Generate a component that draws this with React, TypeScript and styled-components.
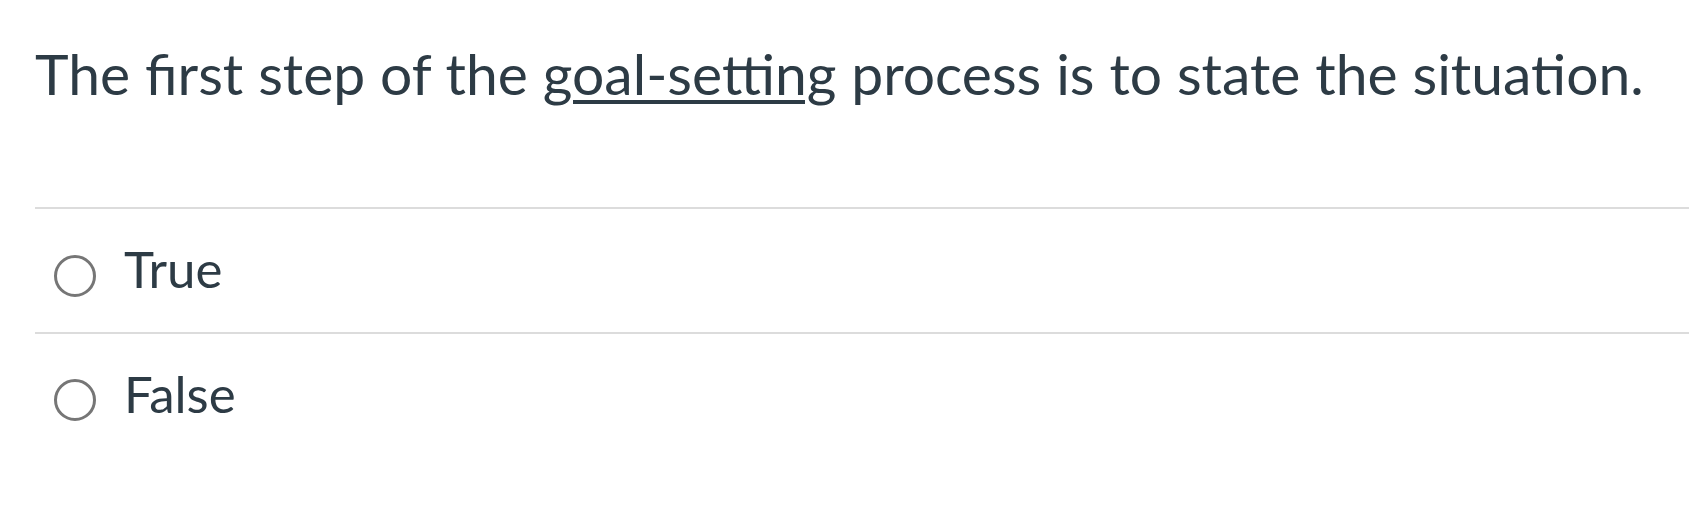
import React from "react";
import styled, { createGlobalStyle } from "styled-components";

const GlobalStyle = createGlobalStyle`
  html, body {
    margin: 0;
    padding: 0;
    background: #ffffff;
  }
  body {
    font-family: Lato, "Noto Sans", sans-serif;
    color: #2d3b45;
  }
`;

const Question = styled.div`
  padding: 0 15px 0 35px;
`;

const QuestionText = styled.p`
  margin: 0;
  padding-top: 39px;
  padding-bottom: 100px;
  font-size: 57px;
  line-height: 1.2;
  word-spacing: 0.3px;
  font-weight: 400;
`;

const Term = styled.span`
  text-decoration: underline;
  text-decoration-thickness: 3.5px;
  text-underline-offset: 5px;
`;

const Answers = styled.div`
  display: flex;
  flex-direction: column;
`;

const AnswerRow = styled.label`
  display: flex;
  align-items: flex-start;
  border-top: 2px solid #dcdcdc;
  padding: 28px 0 32px 19px;
  min-height: 62px;
`;

const Radio = styled.span`
  flex: none;
  width: 42px;
  height: 42px;
  margin-top: 17.5px;
  box-sizing: border-box;
  border: 3px solid #767676;
  border-radius: 50%;
  background: #fff;
`;

const Label = styled.span`
  margin-left: 28px;
  font-size: 51px;
  line-height: 1.2;
  padding-top: 1px;
`;

const answers = ["True", "False"];

export default function App() {
  return (
    <>
      <GlobalStyle />
      <Question>
        <QuestionText>
          The first step of the <Term>goal-setting</Term> process is to state the situation.
        </QuestionText>
        <Answers>
          {answers.map((a) => (
            <AnswerRow key={a}>
              <Radio />
              <Label>{a}</Label>
            </AnswerRow>
          ))}
        </Answers>
      </Question>
    </>
  );
}
